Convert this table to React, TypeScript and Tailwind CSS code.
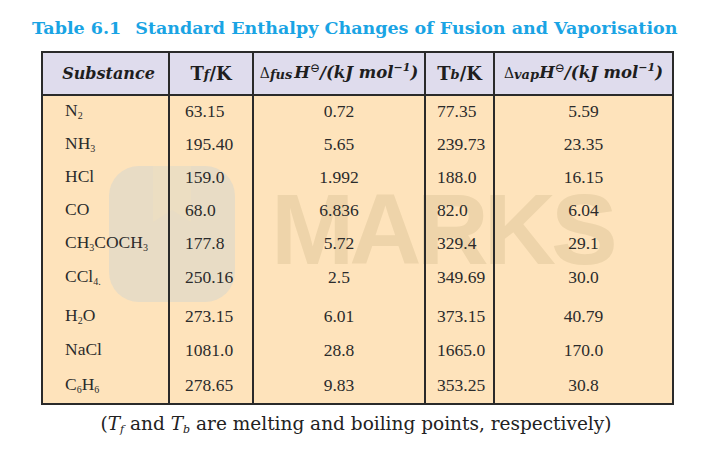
import type { ReactNode } from "react";

const serif = "font-['Liberation_Serif',serif]";
const book = "font-['DejaVu_Serif',serif]";

function Sub({ children }: { children: ReactNode }) {
  return <sub className="text-[10px] relative top-[3px]">{children}</sub>;
}

type Row = {
  name: ReactNode;
  tf: string;
  fus: string;
  tb: string;
  vap: string;
  h: string;
  p?: string;
};

const rows: Row[] = [
  { name: <>N<Sub>2</Sub></>, tf: "63.15", fus: "0.72", tb: "77.35", vap: "5.59", h: "h-[31px]" },
  { name: <>NH<Sub>3</Sub></>, tf: "195.40", fus: "5.65", tb: "239.73", vap: "23.35", h: "h-[34px]" },
  { name: "HCl", tf: "159.0", fus: "1.992", tb: "188.0", vap: "16.15", h: "h-[32px]" },
  { name: "CO", tf: "68.0", fus: "6.836", tb: "82.0", vap: "6.04", h: "h-[34px]" },
  {
    name: <>CH<Sub>3</Sub>COCH<Sub>3</Sub></>,
    tf: "177.8",
    fus: "5.72",
    tb: "329.4",
    vap: "29.1",
    h: "h-[33px]",
  },
  { name: <>CCl<Sub>4.</Sub></>, tf: "250.16", fus: "2.5", tb: "349.69", vap: "30.0", h: "h-[35px]" },
  { name: <>H<Sub>2</Sub>O</>, tf: "273.15", fus: "6.01", tb: "373.15", vap: "40.79", h: "h-[38px]", p: "pt-[4px]" },
  { name: "NaCl", tf: "1081.0", fus: "28.8", tb: "1665.0", vap: "170.0", h: "h-[34px]" },
  { name: <>C<Sub>6</Sub>H<Sub>6</Sub></>, tf: "278.65", fus: "9.83", tb: "353.25", vap: "30.8", h: "h-[36px]" },
];

const cols = "grid grid-cols-[125px_84px_172px_69px_179px]";

function Watermark() {
  return (
    <div className="absolute inset-0 pointer-events-none">
      <svg className="absolute left-[66px] top-[113px]" width="126" height="136" viewBox="0 0 126 136">
        <rect x="0" y="0" width="126" height="136" rx="30" fill="#e8dcc5" />
        <path d="M44 0 H82 V56 L63 44 L44 56 Z" fill="#ecdec2" />
      </svg>
      <div className="absolute left-[228px] top-[126px] text-[100px] leading-none font-bold tracking-[-5px] text-[#eed4aa] font-['Liberation_Sans',sans-serif]">
        MARKS
      </div>
    </div>
  );
}

export default function App() {
  return (
    <div className="w-[724px] h-[457px] bg-white overflow-hidden">
      {/* Title */}
      <div className={`pt-[16px] pl-[32px] text-[17.5px] font-bold text-[#1aa4e4] leading-[24px] whitespace-nowrap ${book}`}>
        Table 6.1<span className="ml-[14px]">Standard Enthalpy Changes of Fusion and Vaporisation</span>
      </div>

      {/* Table */}
      <div className="ml-[41px] mt-[11px] w-[633px] border-2 border-[#2a2a2a] bg-[#fee3bb] relative">
        <Watermark />
        <div className="relative">
          <div className={`${cols} h-[43px] bg-[#dfdced] border-b-2 border-[#2a2a2a] text-[#1e1e1e] ${book}`}>
            <div className="flex items-center justify-center pl-[6px] text-[16px] font-bold italic">Substance</div>
            <div className="flex items-center justify-center border-l-2 border-[#2a2a2a] text-[18px] font-bold">
              T<sub className="text-[13px] italic relative top-[1px]">f</sub>/K
            </div>
            <div className="flex items-center justify-center border-l-2 border-[#2a2a2a] text-[16.5px] font-bold italic whitespace-nowrap">
              <span className="font-normal not-italic text-[14px]">Δ</span>
              <sub className="text-[13px] relative top-[1px]">fus</sub>
              <span className="ml-[2px]">H</span>
              <sup className="text-[12px] font-normal not-italic">⊖</sup>/(kJ mol<sup className="text-[11px]">−1</sup>)
            </div>
            <div className="flex items-center justify-center border-l-2 border-[#2a2a2a] text-[18px] font-bold">
              T<sub className="text-[13px] italic relative top-[1px]">b</sub>/K
            </div>
            <div className="flex items-center justify-center border-l-2 border-[#2a2a2a] text-[16.5px] font-bold italic whitespace-nowrap">
              <span className="font-normal not-italic text-[14px]">Δ</span>
              <sub className="text-[13px] relative top-[1px]">vap</sub>
              <span>H</span>
              <sup className="text-[12px] font-normal not-italic">⊖</sup>/(kJ mol<sup className="text-[11px]">−1</sup>)
            </div>
          </div>

          {rows.map((r, i) => (
            <div key={i} className={`${cols} ${r.h} text-[17.5px] text-[#2b2b2b] ${serif}`}>
              <div className={`flex items-center pl-[22px] pb-[2px] ${r.p ?? ""}`}>
                <span>{r.name}</span>
              </div>
              <div className={`flex items-center pl-[15px] border-l-2 border-[#2a2a2a] ${r.p ?? ""}`}>{r.tf}</div>
              <div className={`flex items-center justify-center border-l-2 border-[#2a2a2a] ${r.p ?? ""}`}>{r.fus}</div>
              <div className={`flex items-center pl-[11px] border-l-2 border-[#2a2a2a] ${r.p ?? ""}`}>{r.tb}</div>
              <div className={`flex items-center justify-center border-l-2 border-[#2a2a2a] ${r.p ?? ""}`}>{r.vap}</div>
            </div>
          ))}
        </div>
      </div>

      {/* Footnote */}
      <div className={`mt-[5px] w-[712px] text-center text-[18.5px] text-[#222] whitespace-nowrap ${book}`}>
        (<i>T</i>
        <sub className="text-[11px] italic">f</sub> and <i>T</i>
        <sub className="text-[11px] italic">b</sub> are melting and boiling points, respectively)
      </div>
    </div>
  );
}
